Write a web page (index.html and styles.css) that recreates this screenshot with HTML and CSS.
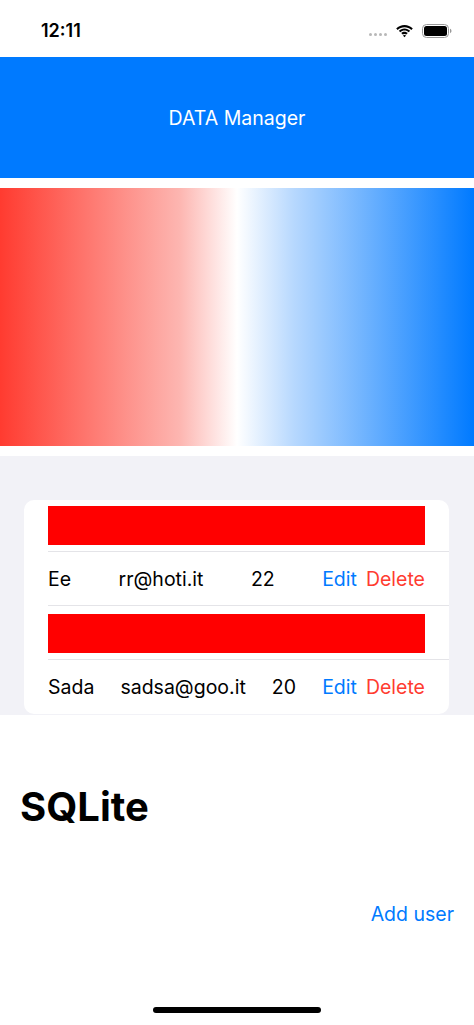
FILE: index.html
```html
<!DOCTYPE html>
<html lang="en">

<head>
    <meta charset="UTF-8">
    <meta name="viewport" content="width=device-width, initial-scale=1.0">
    <title>SQLite</title>
    <link rel="stylesheet" href="styles.css">
</head>

<body>
    <div class="phone">
        <div class="status">
            <span class="time">12:11</span>
            <div class="status-icons">
                <span class="dots"><i></i><i></i><i></i><i></i></span>
                <svg class="wifi" width="19" height="14" viewBox="0 0 19 14">
                    <path d="M9.5 3.2c2.6 0 5 1 6.8 2.7l1.5-1.5C15.6 2.3 12.7 1 9.5 1S3.4 2.3 1.2 4.4l1.5 1.5C4.5 4.2 6.9 3.2 9.5 3.2z" fill="#000"/>
                    <path d="M9.5 6.6c1.600 0 3.1.6 4.2 1.7l1.5-1.5C13.7 5.3 11.7 4.4 9.5 4.4S5.3 5.3 3.8 6.8l1.5 1.5c1.1-1.1 2.6-1.7 4.2-1.7z" fill="#000"/>
                    <path d="M9.5 9.9c.7 0 1.3.3 1.8.7l1.5-1.5c-.9-.8-2.1-1.4-3.3-1.4s-2.4.5-3.3 1.4l1.5 1.5c.5-.4 1.1-.7 1.8-.7zM9.5 13.2l1.6-1.6c-.4-.4-1-.6-1.600-.6s-1.2.2-1.6.6z" fill="#000"/>
                </svg>
                <svg class="battery" width="30" height="14" viewBox="0 0 30 14">
                    <rect x="0.5" y="0.5" width="26" height="13" rx="4" fill="none" stroke="#999" stroke-width="1"/>
                    <rect x="2" y="2" width="23" height="10" rx="2.5" fill="#000"/>
                    <path d="M28 4.8v4.4c.9-.3 1.5-1.2 1.5-2.2s-.6-1.9-1.5-2.2z" fill="#999"/>
                </svg>
            </div>
        </div>

        <header class="topbar">DATA Manager</header>

        <div class="gradient"></div>

        <section class="list-area">
            <div class="card">
                <div class="bar-row"><div class="red-bar"></div></div>
                <div class="user-row">
                    <span>Ee</span>
                    <span>rr@hoti.it</span>
                    <span>22</span>
                    <span class="actions"><span class="edit">Edit</span><span class="delete">Delete</span></span>
                </div>
                <div class="bar-row second"><div class="red-bar"></div></div>
                <div class="user-row last">
                    <span>Sada</span>
                    <span>sadsa@goo.it</span>
                    <span>20</span>
                    <span class="actions"><span class="edit">Edit</span><span class="delete">Delete</span></span>
                </div>
            </div>
        </section>

        <h1 class="title">SQLite</h1>

        <div class="add-row">
            <span class="add-user">Add user</span>
        </div>

        <div class="home-indicator"></div>
    </div>
</body>

</html>
```

FILE: styles.css
```css
body {
    margin: 0px;
    padding: 0px;
    background: #fff;
    font-family: Inter, "Liberation Sans", sans-serif;
    color: #000;
}

.phone {
    width: 474px;
    height: 1025px;
    position: relative;
    overflow: hidden;
}

.status {
    height: 57px;
    display: flex;
    align-items: center;
    justify-content: space-between;
    padding: 0 22px 0 41px;
    box-sizing: border-box;
}

.time {
    font-size: 18px;
    font-weight: 600;
    margin-top: 4px;
}

.status-icons {
    display: flex;
    align-items: center;
    gap: 8px;
    margin-top: 4px;
}

.dots {
    display: flex;
    gap: 2px;
    margin-top: 8px;
}

.dots i {
    width: 3px;
    height: 3px;
    border-radius: 50%;
    background: #b8b8b8;
}

.topbar {
    height: 121px;
    background: #007aff;
    color: #fff;
    font-size: 19.5px;
    display: flex;
    align-items: center;
    justify-content: center;
}

.gradient {
    height: 258px;
    margin-top: 10px;
    background: linear-gradient(to right, #ff3b30 0%, #fdb6b1 38%, #fff 50%, #b7d8fe 62%, #007aff 100%);
}

.list-area {
    margin-top: 10px;
    height: 259px;
    background: #f2f2f7;
    padding: 44px 25px 0 24px;
    box-sizing: border-box;
}

.card {
    background: #fff;
    border-radius: 10px;
    padding-left: 24px;
}

.bar-row {
    height: 52px;
    padding-top: 6px;
    box-sizing: border-box;
    border-bottom: 1px solid #e4e4e8;
}

.bar-row.second {
    height: 54px;
    padding-top: 8px;
}

.red-bar {
    height: 39px;
    width: 377px;
    background: #ff0000;
}

.user-row {
    height: 54px;
    display: flex;
    align-items: center;
    justify-content: space-between;
    padding-right: 24px;
    font-size: 19.5px;
    border-bottom: 1px solid #e4e4e8;
    box-sizing: border-box;
}

.user-row.last {
    border-bottom: none;
}

.actions {
    display: flex;
    gap: 9px;
}

.edit {
    color: #007aff;
}

.delete {
    color: #ff3b30;
}

.title {
    margin: 69px 0 0 20px;
    font-size: 40px;
    font-weight: 700;
    line-height: 46px;
}

.add-row {
    display: flex;
    justify-content: flex-end;
    padding-right: 20px;
    margin-top: 72px;
}

.add-user {
    color: #007aff;
    font-size: 19.5px;
}

.home-indicator {
    position: absolute;
    left: 153px;
    bottom: 12px;
    width: 168px;
    height: 6px;
    border-radius: 3px;
    background: #000;
}
```
